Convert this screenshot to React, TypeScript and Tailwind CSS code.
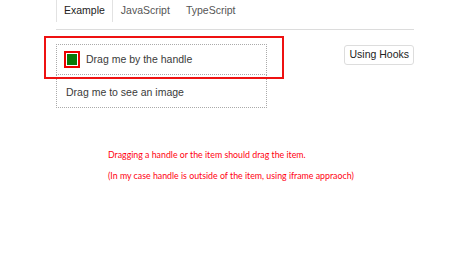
export default function App() {
  return (
    <div className="w-[474px] h-[258px] bg-white font-['Liberation_Sans',Arial,sans-serif] text-[#333]">
      <div className="ml-[56px] w-[358px]">
        <div className="flex h-[30px] border-b border-[#dcdcdc] text-[10.5px]">
          <div className="h-[22px] px-[7px] flex items-center border-x border-[#e2e2e2] text-[#222]">
            Example
          </div>
          <div className="h-[22px] px-[8px] flex items-center text-[#555]">
            JavaScript
          </div>
          <div className="h-[22px] px-[8px] flex items-center text-[#555]">
            TypeScript
          </div>
        </div>

        <div className="flex justify-between items-start mt-[14px]">
          <div className="w-[211px] text-[10.5px] text-[#3a3a3a]">
            <div className="relative h-[31px] flex items-center gap-[6px] pl-[7px] border border-dotted border-[#aaa]">
              <div className="w-[16px] h-[17px] border-2 border-[#e00] p-px bg-white">
                <div className="w-full h-full bg-[#0a7a0a]" />
              </div>
              <span>Drag me by the handle</span>
              <div className="absolute -left-[13px] -top-[9px] w-[240px] h-[43px] border-2 border-[#e11]" />
            </div>
            <div className="h-[33px] flex items-center pt-[3px] pl-[9px] border border-t-0 border-dotted border-[#aaa]">
              Drag me to see an image
            </div>
          </div>
          <button className="mt-px h-[20px] px-[4px] text-[10.5px] text-[#222] border border-[#ddd] rounded-[3px] bg-white">
            Using Hooks
          </button>
        </div>
      </div>

      <div className="ml-[108px] mt-[41px] text-[8.8px] text-[#f01] font-['Lato',sans-serif] leading-[11px]">
        <p>Dragging a handle or the item should drag the item.</p>
        <p className="mt-[10px]">(In my case handle is outside of the item, using iframe appraoch)</p>
      </div>
    </div>
  );
}
